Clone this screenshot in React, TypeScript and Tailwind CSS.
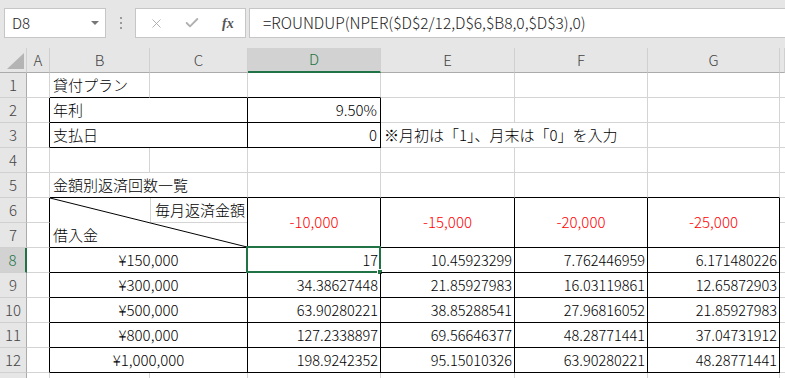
import { Check, X } from "lucide-react";
import type { ReactNode } from "react";

const cell =
  "flex items-center whitespace-nowrap overflow-hidden border-r border-b border-[#d4d4d4] px-[3px]";
const rowHead =
  "flex items-center justify-center border-r border-b border-r-[#ababab] border-b-[#d0d0d0] bg-[#e6e6e6] text-[#444]";
const colHead =
  "flex items-center justify-center border-r border-b border-r-[#d0d0d0] border-b-[#ababab] bg-[#e6e6e6] text-[#444]";

const C = ({ className = "", children }: { className?: string; children?: ReactNode }) => (
  <div className={`${cell} ${className}`}>{children}</div>
);

const RH = ({ n, active }: { n?: number; active?: boolean }) =>
  active ? (
    <div className="flex items-center justify-center border-r-2 border-b border-r-[#217346] border-b-[#d0d0d0] bg-[#d2d2d2] text-[#217346]">
      {n}
    </div>
  ) : (
    <div className={rowHead}>{n}</div>
  );

const loans = [
  { amount: "¥150,000", values: ["17", "10.45923299", "7.762446959", "6.171480226"] },
  { amount: "¥300,000", values: ["34.38627448", "21.85927983", "16.03119861", "12.65872903"] },
  { amount: "¥500,000", values: ["63.90280221", "38.85288541", "27.96816052", "21.85927983"] },
  { amount: "¥800,000", values: ["127.2338897", "69.56646377", "48.28771441", "37.04731912"] },
  { amount: "¥1,000,000", values: ["198.9242352", "95.15010326", "63.90280221", "48.28771441"] },
];

const payments = ["-10,000", "-15,000", "-20,000", "-25,000"];

export default function App() {
  return (
    <div className="h-[378px] w-[785px] overflow-hidden bg-white font-['Noto_Sans_CJK_JP',sans-serif] text-[15px] font-light text-black">
      {/* formula bar */}
      <div className="flex h-[48px] items-start bg-[#e6e6e6] pl-[4px] pt-[8px]">
        <div className="relative flex h-[30px] w-[102px] items-center border border-[#c6c6c6] bg-white pl-[7px] text-[#222]">
          D8
          <div className="absolute right-[6px] top-[12px] h-0 w-0 border-x-[4px] border-t-[4px] border-x-transparent border-t-[#777]" />
        </div>
        <div className="ml-[14px] mt-[9px] flex w-[2px] flex-col gap-[3px]">
          <div className="h-[2px] w-[2px] bg-[#9a9a9a]" />
          <div className="h-[2px] w-[2px] bg-[#9a9a9a]" />
          <div className="h-[2px] w-[2px] bg-[#9a9a9a]" />
        </div>
        <div className="ml-[13px] flex h-[30px] w-[111px] items-center border border-[#c6c6c6] bg-white pl-[13px]">
          <X size={15} strokeWidth={1.4} color="#a6a6a6" />
          <Check size={16} strokeWidth={2.8} color="#b0b0b0" className="ml-[20px]" />
          <span className="ml-[22px] font-['Liberation_Serif',serif] text-[14px] font-bold italic text-[#555]">
            fx
          </span>
        </div>
        <div className="ml-[3px] flex h-[30px] flex-1 items-center border border-r-0 border-[#c6c6c6] bg-white pl-[13px] text-[15.5px] text-[#222]">
          =ROUNDUP(NPER($D$2/12,D$6,$B8,0,$D$3),0)
        </div>
      </div>

      {/* sheet */}
      <div className="grid auto-rows-[25px] grid-cols-[27px_23px_100px_98px_133px_134px_133px_132px_5px]">
        {/* column headers */}
        <div className="relative border-r border-b border-r-[#d0d0d0] border-b-[#ababab] bg-[#e6e6e6]">
          <svg className="absolute left-[7px] top-[5px]" width="17" height="16" viewBox="0 0 17 16">
            <polygon points="17,0 17,16 0,16" fill="#b4b4b4" />
          </svg>
        </div>
        <div className={colHead}>A</div>
        <div className={colHead}>B</div>
        <div className={colHead}>C</div>
        <div className="flex items-center justify-center border-r border-b-2 border-r-[#d0d0d0] border-b-[#217346] bg-[#d2d2d2] text-[#217346]">
          D
        </div>
        <div className={colHead}>E</div>
        <div className={colHead}>F</div>
        <div className={colHead}>G</div>
        <div className={colHead} />

        {/* row 1 */}
        <RH n={1} />
        <C />
        <C className="border-b-black">貸付プラン</C>
        <C className="border-b-black" />
        <C className="border-b-black" />
        <C />
        <C />
        <C />
        <C />

        {/* row 2 */}
        <RH n={2} />
        <C className="border-r-black" />
        <C className="col-span-2 border-r-black border-b-black">年利</C>
        <C className="justify-end border-r-black border-b-black">9.50%</C>
        <C />
        <C />
        <C />
        <C />

        {/* row 3 */}
        <RH n={3} />
        <C className="border-r-black" />
        <C className="col-span-2 border-r-black border-b-black">支払日</C>
        <C className="justify-end border-r-black border-b-black">0</C>
        <C className="col-span-2">※月初は「1」、月末は「0」を入力</C>
        <C />
        <C />

        {/* row 4 */}
        <RH n={4} />
        <C />
        <C />
        <C />
        <C />
        <C />
        <C />
        <C />
        <C />

        {/* row 5 */}
        <RH n={5} />
        <C />
        <C className="col-span-2 border-b-black">金額別返済回数一覧</C>
        <C className="border-b-black" />
        <C className="border-b-black" />
        <C className="border-b-black" />
        <C className="border-b-black" />
        <C />

        {/* rows 6-7 */}
        <RH n={6} />
        <C className="border-r-black" />
        <div className="relative col-span-2 row-span-2 grid grid-cols-[100px_97px] grid-rows-[25px_24px] border-r border-b border-black">
          <div />
          <div className="flex items-center justify-end border-b border-l border-[#d4d4d4] pr-[2px]">
            毎月返済金額
          </div>
          <div className="flex items-center pl-[3px]">借入金</div>
          <div />
          <svg className="absolute inset-0 h-full w-full" viewBox="0 0 100 100" preserveAspectRatio="none">
            <line x1="0" y1="0" x2="100" y2="100" stroke="black" strokeWidth="1" vectorEffect="non-scaling-stroke" />
          </svg>
        </div>
        {payments.map((p) => (
          <div
            key={p}
            className="row-span-2 flex items-center justify-center border-r border-b border-black text-[#ff0000]"
          >
            {p}
          </div>
        ))}
        <C />
        <RH n={7} />
        <C className="border-r-black" />
        <C />

        {/* rows 8-12 */}
        {loans.map((row, i) => (
          <>
            <RH key={`h${i}`} n={8 + i} active={i === 0} />
            <C key={`a${i}`} className="border-r-black" />
            <C key={`b${i}`} className="col-span-2 justify-center border-r-black border-b-black">
              {row.amount}
            </C>
            {row.values.map((v, j) => (
              <div
                key={`v${i}${j}`}
                className="relative flex items-center justify-end whitespace-nowrap border-r border-b border-black pr-[2px] text-[14.5px]"
              >
                {v}
                {i === 0 && j === 0 && (
                  <div className="absolute -bottom-[1px] -left-[2px] -right-[1px] -top-[2px] border-2 border-[#217346]">
                    <div className="absolute -bottom-[4px] -right-[4px] h-[6px] w-[6px] border border-white bg-[#217346]" />
                  </div>
                )}
              </div>
            ))}
            <C key={`h2${i}`} />
          </>
        ))}

        {/* row 13, only its top edge shows */}
        <RH />
        <C />
        <C />
        <C />
        <C />
        <C />
        <C />
        <C />
        <C />
      </div>
    </div>
  );
}
